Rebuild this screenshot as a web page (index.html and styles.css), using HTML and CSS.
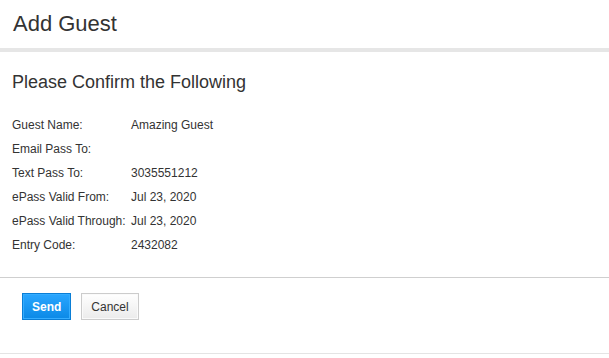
FILE: index.html
```html
<!DOCTYPE html>
<html lang="en">
<head>
    <meta charset="UTF-8">
    <meta name="viewport" content="width=device-width, initial-scale=1.0">
    <title>Add Guest</title>
    <link rel="stylesheet" href="styles.css">
</head>
<body>
    <h1 class="page-title">Add Guest</h1>

    <div class="confirm">
        <h2 class="confirm-title">Please Confirm the Following</h2>
        <div class="details">
            <div class="row"><span class="label">Guest Name:</span><span class="value">Amazing Guest</span></div>
            <div class="row"><span class="label">Email Pass To:</span><span class="value"></span></div>
            <div class="row"><span class="label">Text Pass To:</span><span class="value">3035551212</span></div>
            <div class="row"><span class="label">ePass Valid From:</span><span class="value">Jul 23, 2020</span></div>
            <div class="row"><span class="label">ePass Valid Through:</span><span class="value">Jul 23, 2020</span></div>
            <div class="row"><span class="label">Entry Code:</span><span class="value">2432082</span></div>
        </div>
    </div>

    <div class="actions">
        <button class="btn btn-primary">Send</button>
        <button class="btn">Cancel</button>
    </div>
</body>
</html>
```

FILE: styles.css
```css
body {
    margin: 0;
    font-family: "Liberation Sans", Arial, sans-serif;
    color: #333;
    background-color: #fff;
}

.page-title {
    margin: 0;
    padding-left: 13px;
    height: 48px;
    line-height: 48px;
    font-size: 22px;
    font-weight: normal;
    border-bottom: 4px solid #e6e6e6;
}

.confirm {
    padding: 18px 12px 20px;
    border-bottom: 1px solid #cfcfcf;
}

.confirm-title {
    margin: 0 0 19px;
    font-size: 18px;
    font-weight: normal;
    line-height: 24px;
}

.row {
    display: flex;
    font-size: 12px;
    line-height: 24px;
}

.label {
    width: 119px;
}

.actions {
    display: flex;
    gap: 10px;
    padding: 15px 22px 0;
    height: 60px;
    border-bottom: 1px solid #e4e4e4;
}

.btn {
    box-sizing: border-box;
    height: 27px;
    padding: 0 9px;
    font-family: "Liberation Sans", Arial, sans-serif;
    font-size: 12px;
    color: #333;
    background: linear-gradient(#ffffff, #ebebeb);
    border: 1px solid #cccccc;
    box-shadow: inset 0 0 0 1px #fafafa;
    cursor: pointer;
}

.btn-primary {
    font-weight: bold;
    color: #fff;
    background: linear-gradient(#2aa6ff, #0b89e6);
    border-color: #0a7ed6;
    box-shadow: inset 0 0 0 1px #35adff;
}
```
